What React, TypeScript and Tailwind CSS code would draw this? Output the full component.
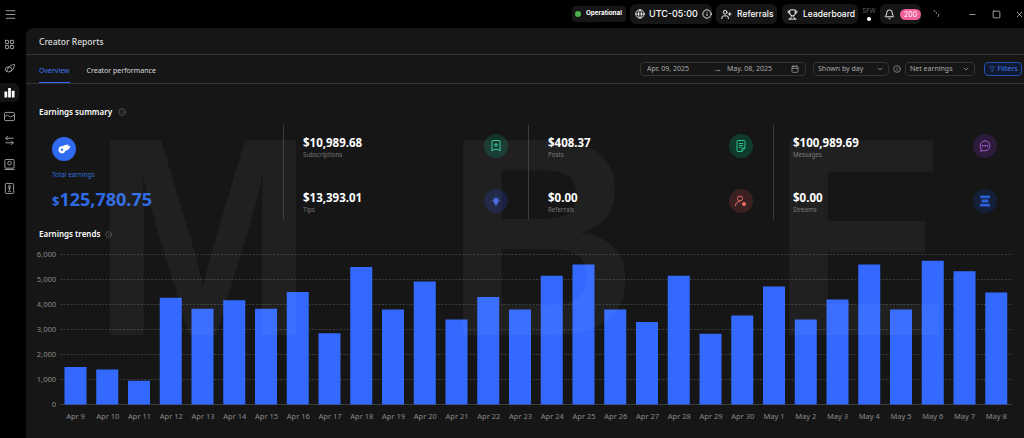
import {
  ArrowLeftRight,
  Bell,
  Calendar,
  ChevronDown,
  Filter,
  Globe,
  Info,
  LayoutGrid,
  Menu,
  Minus,
  Square,
  Trophy,
  UserPlus,
  X,
} from 'lucide-react';
import type { ComponentType, ReactNode } from 'react';

const days = [
  ['Apr 9', 1500], ['Apr 10', 1400], ['Apr 11', 950], ['Apr 12', 4270], ['Apr 13', 3830], ['Apr 14', 4170],
  ['Apr 15', 3830], ['Apr 16', 4500], ['Apr 17', 2850], ['Apr 18', 5500], ['Apr 19', 3800], ['Apr 20', 4920],
  ['Apr 21', 3400], ['Apr 22', 4300], ['Apr 23', 3800], ['Apr 24', 5150], ['Apr 25', 5600], ['Apr 26', 3800],
  ['Apr 27', 3300], ['Apr 28', 5150], ['Apr 29', 2830], ['Apr 30', 3560], ['May 1', 4720], ['May 2', 3400],
  ['May 3', 4200], ['May 4', 5600], ['May 5', 3800], ['May 6', 5750], ['May 7', 5330], ['May 8', 4480],
] as const;

const ticks = [6000, 5000, 4000, 3000, 2000, 1000, 0];

type IconProps = { className?: string };

function Glyph({ className, children, fill = 'none' }: IconProps & { children: ReactNode; fill?: string }) {
  return (
    <svg viewBox="0 0 12 12" className={className} fill={fill} stroke={fill === 'none' ? 'currentColor' : 'none'} strokeWidth="1">
      {children}
    </svg>
  );
}

const LeafIcon = ({ className }: IconProps) => (
  <Glyph className={className}>
    <ellipse cx="5" cy="7" rx="3.6" ry="2.8" />
    <path d="M3 9C5 3 8 2 11.5 1.5 11 5 10 8 6.5 9.5" />
  </Glyph>
);

const BarsIcon = ({ className }: IconProps) => (
  <Glyph className={className} fill="currentColor">
    <rect x="0.5" y="5" width="3" height="6.5" rx="0.6" />
    <rect x="4.5" y="1" width="3" height="10.5" rx="0.6" />
    <rect x="8.5" y="4" width="3" height="7.5" rx="0.6" />
  </Glyph>
);

const WaveBoxIcon = ({ className }: IconProps) => (
  <Glyph className={className}>
    <rect x="0.5" y="1.5" width="11" height="9" rx="1.5" />
    <path d="M1 6.5c1.5-2.5 2.5-2.5 4-1s2.500 1.500 6-1" />
  </Glyph>
);

const ProfileIcon = ({ className }: IconProps) => (
  <Glyph className={className}>
    <rect x="1" y="0.500" width="10" height="9.500" rx="1" />
    <circle cx="6" cy="4.500" r="2" />
    <path d="M0.500 11.500h11" />
  </Glyph>
);

const BadgeIcon = ({ className }: IconProps) => (
  <Glyph className={className}>
    <rect x="1.500" y="0.500" width="9" height="11" rx="1" />
    <circle cx="6" cy="3.500" r="1" />
    <path d="M4 5.500h4M6 5.500v2.500M4.500 10l1.500-2 1.500 2" />
  </Glyph>
);

const SubsIcon = ({ className }: IconProps) => (
  <Glyph className={className}>
    <path d="M2 1.500a1 1 0 0 1 1-1h6a1 1 0 0 1 1 1v9.500l-2-1.500H4l-2 1.500z" />
    <path d="M6 3v4M4 5h4" />
  </Glyph>
);

const TipsIcon = ({ className }: IconProps) => (
  <svg viewBox="0 0 12 12" className={className} fill="currentColor" stroke="currentColor" strokeWidth="0.7">
    <path d="M6 3a2.600 2.600 0 0 0-1.500 4.700V9h3V7.700A2.600 2.600 0 0 0 6 3z" />
    <path d="M5 10.500h2M6 0.500v1M1 5.500h1M10 5.500h1M2.500 2l.7.7M9.500 2l-.7.7" fill="none" />
  </svg>
);

const PostsIcon = ({ className }: IconProps) => (
  <Glyph className={className}>
    <path d="M3 0.500h6a1 1 0 0 1 1 1V8l-3 3.500H3a1 1 0 0 1-1-1v-9a1 1 0 0 1 1-1z" />
    <path d="M4 3.500h4M4 5.500h4M4 7.500h2M10 8H7v3.500" />
  </Glyph>
);

const ReferralIcon = ({ className }: IconProps) => (
  <Glyph className={className}>
    <circle cx="5" cy="3.500" r="2.500" />
    <path d="M0.500 11c0-3 2-4.500 4.500-4.500" />
    <circle cx="9" cy="9" r="1.600" fill="currentColor" />
  </Glyph>
);

const MessagesIcon = ({ className }: IconProps) => (
  <svg viewBox="0 0 12 12" className={className} fill="none" stroke="currentColor" strokeWidth="1">
    <path d="M6 0.800a5 5 0 1 1-1.800 9.700L1.500 11.300l.8-2.300A5 5 0 0 1 6 0.800z" />
    <circle cx="3.800" cy="5.800" r="0.500" fill="currentColor" />
    <circle cx="6" cy="5.800" r="0.500" fill="currentColor" />
    <circle cx="8.200" cy="5.800" r="0.500" fill="currentColor" />
  </svg>
);

const StreamsIcon = ({ className }: IconProps) => (
  <Glyph className={className} fill="currentColor">
    <rect x="1" y="0.500" width="10" height="2.800" rx="0.500" />
    <rect x="2.500" y="4.600" width="7" height="2.800" rx="0.500" />
    <rect x="1" y="8.700" width="10" height="2.800" rx="0.500" />
  </Glyph>
);

function TopBar() {
  return (
    <div className="flex h-7 shrink-0 items-center text-white">
      <Menu className="ml-[4px] size-[13px] text-[#bbb]" strokeWidth={1.5} />
      <div className="ml-auto flex items-center whitespace-nowrap font-['Inter',sans-serif]">
        <div className="flex h-[16px] w-[54px] items-center gap-[5px] rounded bg-[#161616] pl-[3px] text-[6.3px] font-bold">
          <span className="size-[6px] shrink-0 rounded-full bg-[#4caf50]" />
          Operational
        </div>
        <div className="ml-[4px] flex h-[20px] w-[82px] items-center gap-[4px] rounded-md bg-[#161616] pl-[5px] text-[9px] font-medium">
          <Globe className="size-[10px] shrink-0" />
          UTC-05:00
          <Info className="size-[10px] shrink-0" />
        </div>
        <div className="ml-[4px] flex h-[20px] w-[61px] items-center gap-[5px] rounded-md bg-[#161616] pl-[5px] text-[8.5px] font-medium">
          <UserPlus className="size-[11px] shrink-0" />
          Referrals
        </div>
        <div className="ml-[5px] flex h-[20px] w-[76px] items-center gap-[5px] rounded-md bg-[#161616] pl-[5px] text-[8.5px] font-medium">
          <Trophy className="size-[11px] shrink-0" />
          Leaderboard
        </div>
        <div className="ml-[4px] flex w-[14px] flex-col items-center text-[6px] leading-[8px] text-[#666]">
          SFW
          <span className="mt-[2px] size-[4px] rounded-full bg-white" />
        </div>
        <div className="ml-[4px] flex h-[20px] w-[41px] items-center gap-[5px] rounded-md bg-[#161616] pl-[4px]">
          <Bell className="size-[11px] shrink-0" />
          <span className="rounded-full bg-[#f0609a] px-[4px] text-[7px] leading-[11px]">200</span>
        </div>
        <svg className="ml-[11px] size-[10px] text-[#888]" viewBox="0 0 10 10" fill="none" stroke="currentColor">
          <path d="M2 1l1 2M4 3l1 2M6 5l1 1M6 8l1-2" />
        </svg>
        <Minus className="ml-[26px] size-[9px] text-[#ccc]" />
        <Square className="ml-[15px] size-[9px] text-[#ccc]" />
        <X className="ml-[14px] mr-0 size-[9px] text-[#ccc]" />
      </div>
    </div>
  );
}

function Sidebar() {
  const icons = [LayoutGrid, LeafIcon, BarsIcon, WaveBoxIcon, ArrowLeftRight, ProfileIcon, BadgeIcon];
  return (
    <div className="flex w-[26px] shrink-0 flex-col items-start pt-[4px]">
      {icons.map((Icon, i) => (
        <div key={i} className="flex h-[24px] w-[19px] items-center">
          <div className={`flex h-[19px] w-full items-center justify-center rounded-r-md ${i === 2 ? 'bg-[#131313]' : ''}`}>
            <Icon className={`size-[11px] ${i === 2 ? 'text-white' : 'text-[#aaa]'}`} />
          </div>
        </div>
      ))}
    </div>
  );
}

function Toolbar() {
  return (
    <div className="flex items-center text-[7px] text-[#aaa]">
      <div className="flex h-[14px] w-[166px] items-center rounded-sm border border-[#333] px-[6px]">
        Apr. 09, 2025
        <span className="ml-[24px] text-[9px] text-[#999]">→</span>
        <span className="ml-[5px]">May. 08, 2025</span>
        <Calendar className="ml-auto size-[8px]" />
      </div>
      <div className="ml-[7px] flex h-[14px] w-[76px] items-center justify-between rounded-sm border border-[#333] px-[4px]">
        Shown by day
        <ChevronDown className="size-[8px]" />
      </div>
      <Info className="ml-[4px] size-[8px]" />
      <div className="ml-[4px] flex h-[14px] w-[70px] items-center justify-between rounded-sm border border-[#333] px-[4px]">
        Net earnings
        <ChevronDown className="size-[8px]" />
      </div>
      <div className="ml-[9px] mr-[2px] flex h-[14px] w-[38px] items-center justify-center gap-[3px] rounded-sm border border-[#2450b0] bg-[#101a30] text-[#3f78ee]">
        <Filter className="size-[6px]" />
        Filters
      </div>
    </div>
  );
}

type StatProps = {
  value: string;
  label: string;
  icon: ComponentType<IconProps>;
  tint: string;
  color: string;
};

function Stat({ value, label, icon: Icon, tint, color }: StatProps) {
  return (
    <div className="flex h-[31px] items-start justify-between pl-[19px] pr-[20px]">
      <div className="pt-[1px]">
        <div className="text-[11.5px] font-bold leading-[15px] text-white">{value}</div>
        <div className="text-[6.2px] leading-[9px] text-[#777]">{label}</div>
      </div>
      <div className={`flex size-[24px] items-center justify-center rounded-full ${tint}`}>
        <Icon className={`size-[12px] ${color}`} />
      </div>
    </div>
  );
}

function StatColumn({ width, children }: { width: string; children: ReactNode }) {
  return <div className={`flex flex-col gap-[24px] pt-[9px] ${width}`}>{children}</div>;
}

function Chart() {
  return (
    <svg width="998" height="162" className="block" fontFamily="'Noto Sans', sans-serif">
      {ticks.map((t) => {
        const y = 6.5 + (6000 - t) / 40;
        return (
          <g key={t}>
            <line x1="34" x2="986" y1={y} y2={y} stroke="#3c3c3c" strokeDasharray={t === 0 ? undefined : '2 1.500'} />
            <text x="30" y={y + 2.5} textAnchor="end" fontSize="7.5" fill="#8a8a8a">
              {t.toLocaleString('en-US')}
            </text>
          </g>
        );
      })}
      {days.map(([label, value], i) => {
        const h = value / 40;
        return <rect key={label} x={38.5 + i * 31.75} y={156.5 - h} width="22" height={h} fill="#3369ff" />;
      })}
    </svg>
  );
}

export default function App() {
  return (
    <div className="flex h-[438px] w-[1024px] flex-col overflow-hidden bg-black font-['Noto_Sans',sans-serif]">
      <TopBar />
      <div className="flex min-h-0 flex-1">
        <Sidebar />
        <div className="relative flex-1 overflow-hidden rounded-tl-lg bg-[#161616]">
          <div className="relative">
            <div className="flex h-[27px] items-center border-b border-[#333] pl-[13px] pt-[2px] text-[8.5px] font-medium text-[#ddd]">
              Creator Reports
            </div>
            <div className="flex h-[29px] items-center justify-between border-b border-[#333] pl-[13px]">
              <div className="flex h-full items-center text-[7px] text-[#ddd]">
                <span className="flex h-full items-center border-b border-[#3369ff] pt-[5px] text-[#3f78ee]">Overview</span>
                <span className="ml-[17px] pt-[5px]">Creator performance</span>
              </div>
              <Toolbar />
            </div>
            <div className="flex h-[41px] items-start gap-[6px] pl-[13px] pt-[21px] text-[8px] font-semibold leading-[14px] text-white">
              Earnings summary
              <Info className="mt-[3px] size-[8px] text-[#888]" strokeWidth={1.5} />
            </div>
            <div className="flex h-[95px]">
              <div className="w-[258px] border-r border-[#3a3a3a] pl-[26px] pt-[12px]">
                <div className="flex size-[24px] items-center justify-center rounded-full bg-[#2f6bf0]">
                  <svg viewBox="0 0 24 24" className="size-[17px]" fill="white" fillRule="evenodd">
                    <path d="M8.500 7.500a5 5 0 1 0 4.800 6.300C17 13.500 19 11 20.500 7.500h-4.500c.8-.8 1.800-1.500 2.800-2-3.800-.6-7.300 0-10.300 2zm0 3a1.700 1.700 0 1 1 0 3.400 1.700 1.700 0 0 1 0-3.400z" />
                  </svg>
                </div>
                <div className="mt-[9px] text-[6.4px] leading-[10px] text-[#2b70dc]">Total earnings</div>
                <div className="mt-[7px] font-bold leading-[24px] text-[#2f6be5]">
                  <span className="text-[13px]">$</span>
                  <span className="text-[18px]">125,780.75</span>
                </div>
              </div>
              <div className="w-[245px] border-r border-[#3a3a3a]">
                <StatColumn width="w-full">
                  <Stat value="$10,989.68" label="Subscriptions" icon={SubsIcon} tint="bg-[#12352c]" color="text-[#2fc58f]" />
                  <Stat value="$13,393.01" label="Tips" icon={TipsIcon} tint="bg-[#1a2140]" color="text-[#4766e0]" />
                </StatColumn>
              </div>
              <div className="w-[245px] border-r border-[#3a3a3a]">
                <StatColumn width="w-full">
                  <Stat value="$408.37" label="Posts" icon={PostsIcon} tint="bg-[#0f3a2e]" color="text-[#2fc58f]" />
                  <Stat value="$0.00" label="Referrals" icon={ReferralIcon} tint="bg-[#3a2020]" color="text-[#e86a6a]" />
                </StatColumn>
              </div>
              <StatColumn width="w-[243px]">
                <Stat value="$100,989.69" label="Messages" icon={MessagesIcon} tint="bg-[#2c1b3a]" color="text-[#a95ed8]" />
                <Stat value="$0.00" label="Streams" icon={StreamsIcon} tint="bg-[#141f38]" color="text-[#2a5fd8]" />
              </StatColumn>
            </div>
            <div className="flex h-[28px] items-center gap-[5px] pl-[13px] text-[8px] font-semibold text-white">
              Earnings trends
              <Info className="size-[7px] text-[#888]" strokeWidth={1.5} />
            </div>
            <Chart />
            <div className="ml-[38.5px] flex w-[952.5px] text-[7.5px] leading-[12px] text-[#8a8a8a]">
              {days.map(([label]) => (
                <span key={label} className="w-[31.75px] shrink-0 pr-[9.75px] text-center whitespace-nowrap">
                  {label}
                </span>
              ))}
            </div>
          </div>
          {/* watermark sits over the content, faintly */}
          <div className="pointer-events-none absolute left-[66px] top-[68px] flex origin-left scale-x-[0.94] font-['Liberation_Sans',sans-serif] text-[283px] font-bold leading-[283px] text-white/[0.045]">
            <span className="w-[376px] shrink-0">M</span>
            <span className="w-[347px] shrink-0">B</span>
            <span className="shrink-0">E</span>
          </div>
        </div>
      </div>
    </div>
  );
}
